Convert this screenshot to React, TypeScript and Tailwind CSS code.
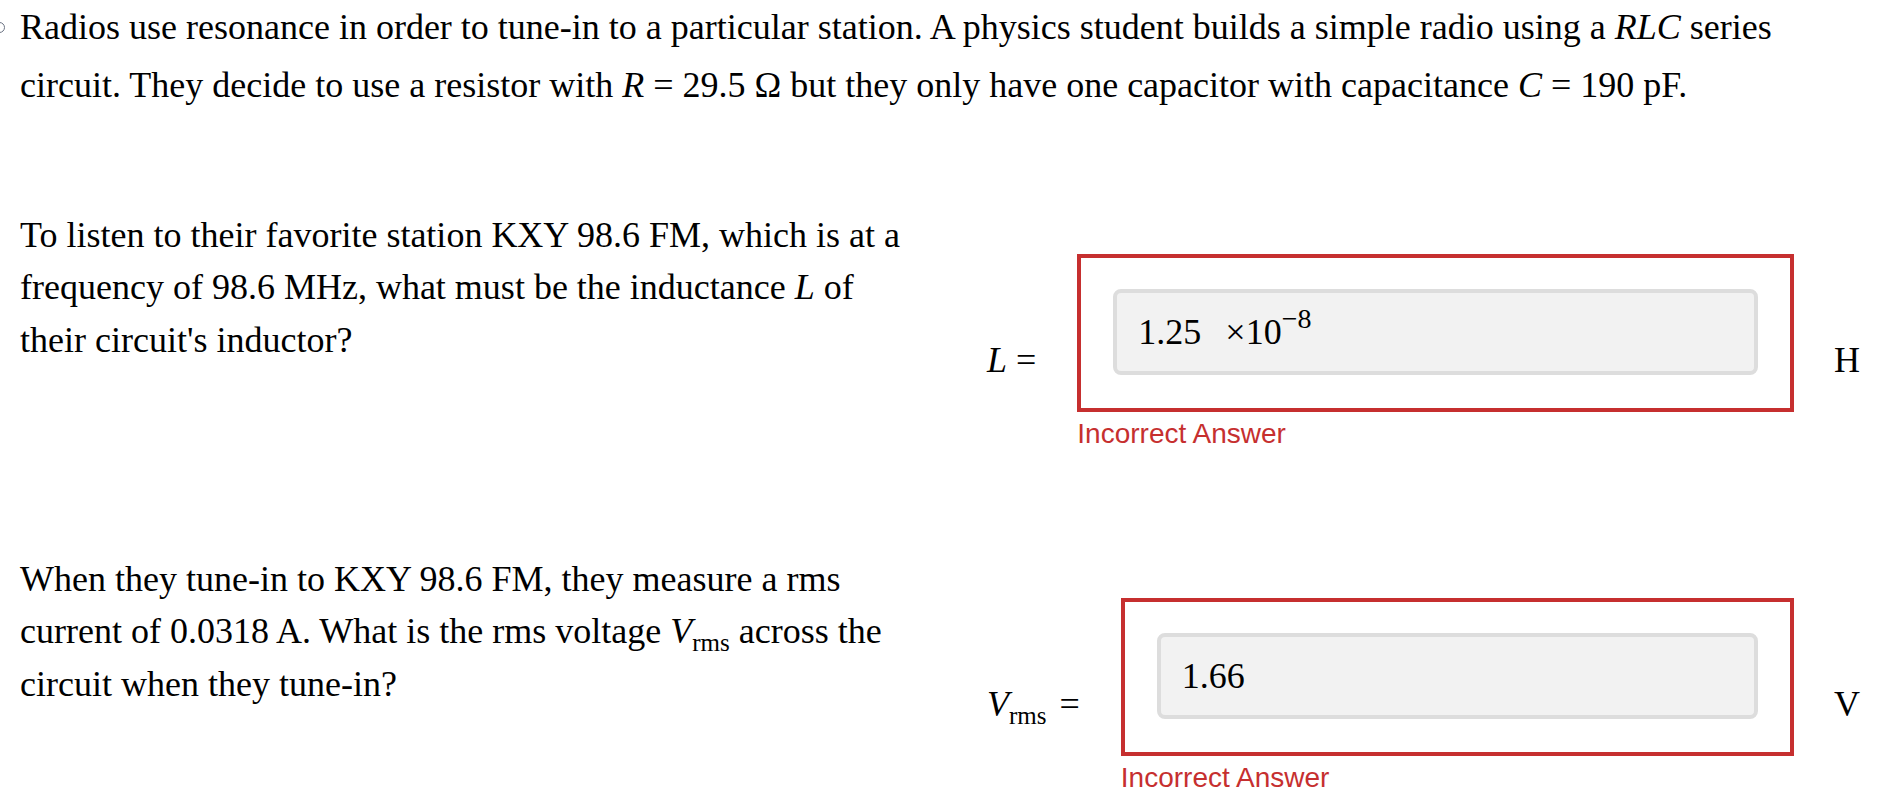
import React from 'react';

const RED = 'border-[#c62f2f]';

function Vrms() {
    return (
        <span className="whitespace-nowrap">
            <span className="italic">V</span>
            <span className="relative top-[8px] text-[25px] leading-none">rms</span>
        </span>
    );
}

interface AnswerProps {
    label: React.ReactNode;
    unit: string;
    value: React.ReactNode;
}

function Answer({ label, unit, value }: AnswerProps) {
    return (
        <div className="ml-[72px] flex flex-1 items-start pt-[45px]">
            <div className="whitespace-nowrap pt-[86px] leading-[40px]">{label}</div>
            <div className="ml-[41px] flex-1">
                <div className={`border-4 ${RED} pb-[33px] pl-[32px] pr-[32px] pt-[31px]`}>
                    <div className="flex h-[86px] items-center rounded-[8px] border-4 border-[#dddddd] bg-[#f2f2f2] pl-[21px] leading-[40px]">
                        {value}
                    </div>
                </div>
                <div className="mt-[6px] font-['Liberation_Sans',Arial,sans-serif] text-[28px] leading-[32px] text-[#c62f2f]">
                    Incorrect Answer
                </div>
            </div>
            <div className="w-[92px] shrink-0 pr-[26px] pt-[86px] text-right leading-[40px]">{unit}</div>
        </div>
    );
}

export default function App() {
    return (
        <div className="relative h-[798px] w-[1886px] overflow-hidden bg-white font-['Liberation_Serif','Times_New_Roman',serif] text-[36px] text-black">
            <p className="relative -mt-[2.5px] pl-[20px] pr-[40px] leading-[58px]">
                <span className="absolute left-[-6px] top-[24px] h-[11px] w-[11px] rounded-full border-[1.5px] border-gray-500" />
                Radios use resonance in order to tune-in to a particular station. A physics student builds a simple radio
                using a <span className="italic">RLC</span> series circuit. They decide to use a resistor with{' '}
                <span className="italic">R</span> = 29.5 Ω but they only have one capacitor with capacitance{' '}
                <span className="italic">C</span> = 190 pF.
            </p>

            <div className="mt-[95px] flex">
                <p className="w-[915px] shrink-0 pl-[20px] leading-[52.5px]">
                    To listen to their favorite station KXY 98.6 FM, which is at a frequency of 98.6 MHz, what must be the
                    inductance <span className="italic">L</span> of their circuit's inductor?
                </p>
                <Answer
                    label={
                        <>
                            <span className="italic">L</span> =
                        </>
                    }
                    unit="H"
                    value={
                        <span className="whitespace-nowrap">
                            1.25
                            <span className="ml-[24px]">×10</span>
                            <span className="relative -top-[16px] text-[28px] leading-none">−8</span>
                        </span>
                    }
                />
            </div>

            <div className="mt-[103px] flex">
                <p className="w-[915px] shrink-0 pl-[20px] leading-[52.5px]">
                    When they tune-in to KXY 98.6 FM, they measure a rms current of 0.0318 A. What is the rms voltage{' '}
                    <Vrms /> across the circuit when they tune-in?
                </p>
                <Answer
                    label={
                        <>
                            <Vrms /> <span className="ml-[4px]">=</span>
                        </>
                    }
                    unit="V"
                    value={<span>1.66</span>}
                />
            </div>
        </div>
    );
}
